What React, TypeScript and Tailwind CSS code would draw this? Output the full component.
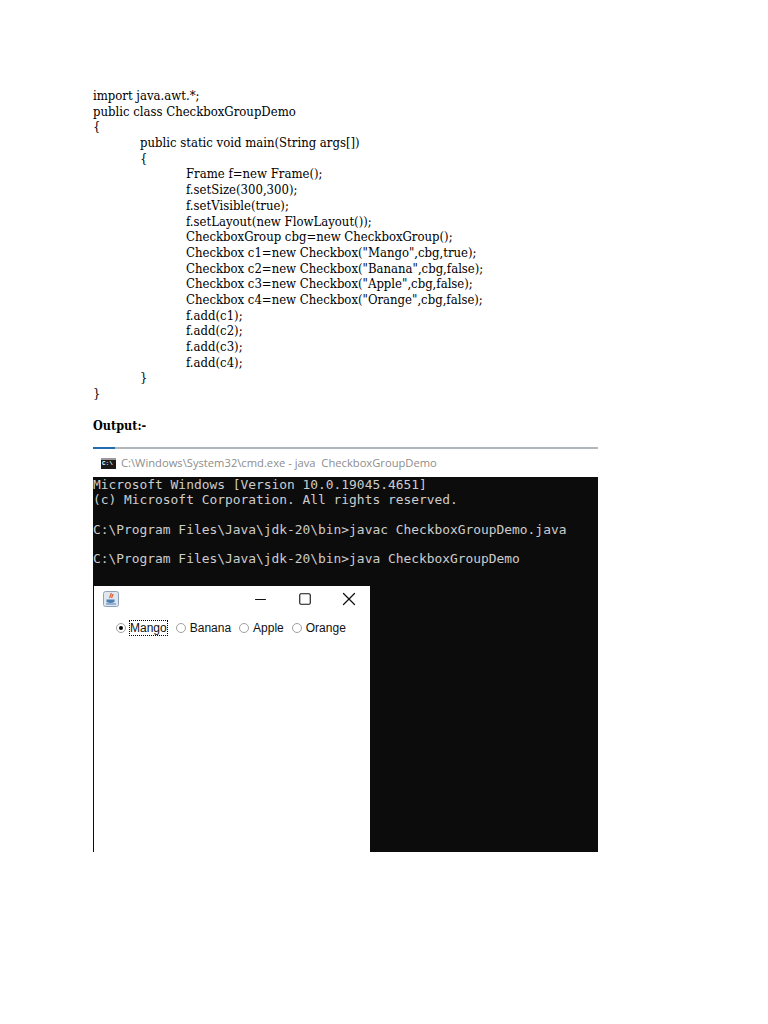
import React from 'react';
import { Minus, Square, X } from 'lucide-react';

const SERIF = "font-['DejaVu_Serif',serif] font-stretch-condensed";

const codeLines: [number, string][] = [
  [0, 'import java.awt.*;'],
  [0, 'public class CheckboxGroupDemo'],
  [0, '{'],
  [1, 'public static void main(String args[])'],
  [1, '{'],
  [2, 'Frame f=new Frame();'],
  [2, 'f.setSize(300,300);'],
  [2, 'f.setVisible(true);'],
  [2, 'f.setLayout(new FlowLayout());'],
  [2, 'CheckboxGroup cbg=new CheckboxGroup();'],
  [2, 'Checkbox c1=new Checkbox("Mango",cbg,true);'],
  [2, 'Checkbox c2=new Checkbox("Banana",cbg,false);'],
  [2, 'Checkbox c3=new Checkbox("Apple",cbg,false);'],
  [2, 'Checkbox c4=new Checkbox("Orange",cbg,false);'],
  [2, 'f.add(c1);'],
  [2, 'f.add(c2);'],
  [2, 'f.add(c3);'],
  [2, 'f.add(c4);'],
  [1, '}'],
  [0, '}'],
];

const Radio = ({ label, checked }: { label: string; checked?: boolean }) => (
  <div className={checked ? 'flex items-center gap-[3px]' : 'flex items-center gap-[4px]'}>
    <span className="flex h-[10px] w-[10px] items-center justify-center rounded-full border border-[#a0a0a0] bg-white">
      {checked && <span className="h-[4px] w-[4px] rounded-full bg-black" />}
    </span>
    <span className={checked ? 'border border-dotted border-black leading-[14px]' : 'leading-[14px]'}>{label}</span>
  </div>
);

const JavaIcon = () => (
  <svg width="16" height="16" viewBox="0 0 16 16">
    <rect x="0.5" y="0.5" width="15" height="15" rx="2" fill="#dfe6f0" stroke="#8ea2bd" />
    <path d="M8 2c1 2-2 3-1 5M10 3c0 2-2 2-1 4" fill="none" stroke="#d9541e" strokeWidth="1.2" />
    <path d="M3.500 8.500h8v2.500q-4 2-8 0z" fill="#4f7fb0" />
    <path d="M3 13h10" stroke="#4f7fb0" strokeWidth="1" />
  </svg>
);

export default function App() {
  return (
    <div className="min-h-[1024px] w-[768px] bg-white pl-[93px] pr-[170px] pt-[88px] text-black">
      <div className={`${SERIF} text-[13px] leading-[15.68px]`}>
        {codeLines.map(([indent, text], i) => (
          <div key={i} className={indent === 2 ? 'pl-[93px]' : indent === 1 ? 'pl-[47px]' : ''}>
            {text}
          </div>
        ))}
        <div className="mt-[16px] text-[12.5px] font-bold">Output:-</div>
      </div>

      <div className="relative mt-[14px] flex h-[2px] bg-[#b0b7bc]">
        <div className="h-full w-[22px] bg-[#1f6fb0]" />
        <div className="absolute left-[190px] top-0 h-[2px] w-[1px] bg-[#e0a070]" />
        <div className="absolute left-[264px] top-0 h-[2px] w-[1px] bg-[#e0a070]" />
      </div>

      <div className="flex h-[28px] items-center gap-[5px] pl-[8px] font-['Open_Sans',sans-serif] text-[11.2px] text-[#8d8d8d]">
        <div className="flex h-[11px] w-[15px] items-start border-t-2 border-[#9a9a9a] bg-[#1a1a1a] pl-[1px] pt-[1px] font-['Liberation_Mono',monospace] text-[6px] font-bold leading-[6px] text-white">
          C:\
        </div>
        <span className="whitespace-pre">C:\Windows\System32\cmd.exe - java  CheckboxGroupDemo</span>
      </div>

      <div className="flex h-[375px] w-[505px] flex-col bg-[#0c0c0c]">
        <div className="h-[109px] whitespace-pre pt-[1px] font-['DejaVu_Sans_Mono',monospace] text-[12.9px] leading-[14.75px] text-[#cccccc]">
          <div>Microsoft Windows [Version 10.0.19045.4651]</div>
          <div>(c) Microsoft Corporation. All rights reserved.</div>
          <div>&nbsp;</div>
          <div>C:\Program Files\Java\jdk-20\bin&gt;javac CheckboxGroupDemo.java</div>
          <div>&nbsp;</div>
          <div>C:\Program Files\Java\jdk-20\bin&gt;java CheckboxGroupDemo</div>
        </div>

        <div className="ml-[1px] flex h-[266px] w-[276px] flex-col bg-white font-['Liberation_Sans',sans-serif] text-[12px] text-[#111]">
          <div className="flex h-[26px] items-center pl-[9px] pr-[10px]">
            <JavaIcon />
            <div className="ml-auto flex items-center text-[#111]">
              <Minus size={17} strokeWidth={1.7} />
              <Square size={14} strokeWidth={1.9} className="ml-[29px]" />
              <X size={22} strokeWidth={1.3} className="ml-[26px]" />
            </div>
          </div>
          <div className="flex items-center gap-[8px] pl-[22px] pt-[8px]">
            <Radio label="Mango" checked />
            <Radio label="Banana" />
            <Radio label="Apple" />
            <Radio label="Orange" />
          </div>
        </div>
      </div>
    </div>
  );
}
